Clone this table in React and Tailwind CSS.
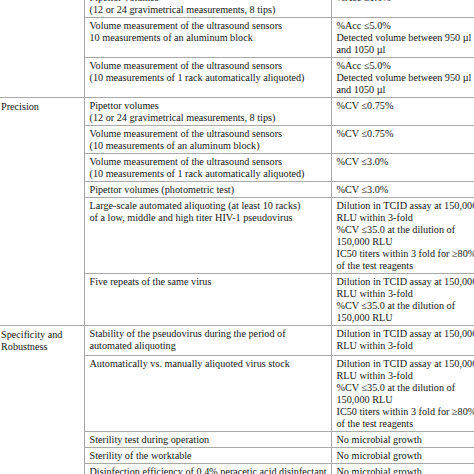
const sections = [
  {
    label: ["Trueness", "(Accuracy)"],
    rows: [
      { test: ["Pipettor volumes (photometric test)"], crit: ["%Acc ≤1.0%"] },
      { test: ["Pipettor volumes", "(12 or 24 gravimetrical measurements, 8 tips)"], crit: ["%Acc ≤1.0%"] },
      {
        test: ["Volume measurement of the ultrasound sensors", "10 measurements of an aluminum block"],
        crit: ["%Acc ≤5.0%", "Detected volume between 950 µl", "and 1050 µl"],
      },
      {
        test: ["Volume measurement of the ultrasound sensors", "(10 measurements of 1 rack automatically aliquoted)"],
        crit: ["%Acc ≤5.0%", "Detected volume between 950 µl", "and 1050 µl"],
      },
    ],
  },
  {
    label: ["Precision"],
    rows: [
      { test: ["Pipettor volumes", "(12 or 24 gravimetrical measurements, 8 tips)"], crit: ["%CV ≤0.75%"] },
      {
        test: ["Volume measurement of the ultrasound sensors", "(10 measurements of an aluminum block)"],
        crit: ["%CV ≤0.75%"],
      },
      {
        test: ["Volume measurement of the ultrasound sensors", "(10 measurements of 1 rack automatically aliquoted)"],
        crit: ["%CV ≤3.0%"],
      },
      { test: ["Pipettor volumes (photometric test)"], crit: ["%CV ≤3.0%"] },
      {
        test: ["Large-scale automated aliquoting (at least 10 racks)", "of a low, middle and high titer HIV-1 pseudovirus"],
        crit: [
          "Dilution in TCID assay at 150,000",
          "RLU within 3-fold",
          "%CV ≤35.0 at the dilution of",
          "150,000 RLU",
          "IC50 titers within 3 fold for ≥80%",
          "of the test reagents",
        ],
      },
      {
        test: ["Five repeats of the same virus"],
        crit: ["Dilution in TCID assay at 150,000", "RLU within 3-fold", "%CV ≤35.0 at the dilution of", "150,000 RLU"],
      },
    ],
  },
  {
    label: ["Specificity and", "Robustness"],
    rows: [
      {
        test: ["Stability of the pseudovirus during the period of", "automated aliquoting"],
        crit: ["Dilution in TCID assay at 150,000", "RLU within 3-fold"],
        tall: true,
      },
      {
        test: ["Automatically vs. manually aliquoted virus stock"],
        crit: [
          "Dilution in TCID assay at 150,000",
          "RLU within 3-fold",
          "%CV ≤35.0 at the dilution of",
          "150,000 RLU",
          "IC50 titers within 3 fold for ≥80%",
          "of the test reagents",
        ],
      },
      { test: ["Sterility test during operation"], crit: ["No microbial growth"] },
      { test: ["Sterility of the worktable"], crit: ["No microbial growth"] },
      { test: ["Disinfection efficiency of 0.4% peracetic acid disinfectant"], crit: ["No microbial growth"] },
    ],
  },
];

function Lines({ items }) {
  return items.map((t, i) => (
    <div key={i} className="whitespace-nowrap">
      {t}
    </div>
  ));
}

export default function App() {
  return (
    <div className="w-[474px] h-[474px] overflow-hidden bg-white">
      <table
        className="-mt-[27px] w-[520px] border-collapse table-fixed text-[10.2px] leading-[12px] text-[#161616]"
        style={{ fontFamily: '"Liberation Serif", "Times New Roman", serif' }}
      >
        <colgroup>
          <col className="w-[84px]" />
          <col className="w-[247px]" />
          <col />
        </colgroup>
        <tbody>
          {sections.map((sec, si) =>
            sec.rows.map((row, ri) => (
              <tr key={`${si}-${ri}`} className={ri === 0 ? "border-t border-[#a8a8a8]" : ""}>
                {ri === 0 && (
                  <td
                    rowSpan={sec.rows.length}
                    className="align-top pl-[1px] pt-[3px] border-r border-[#a8a8a8]"
                  >
                    <Lines items={sec.label} />
                  </td>
                )}
                <td
                  className={`align-top pl-[5px] pt-[2px] border-t border-r border-[#a8a8a8] ${
                    row.tall ? "pb-[3px]" : "pb-[1px]"
                  }`}
                >
                  <Lines items={row.test} />
                </td>
                <td className="align-top pl-[5px] pt-[2px] pb-[1px] border-t border-[#a8a8a8]">
                  <Lines items={row.crit} />
                </td>
              </tr>
            ))
          )}
        </tbody>
      </table>
    </div>
  );
}
